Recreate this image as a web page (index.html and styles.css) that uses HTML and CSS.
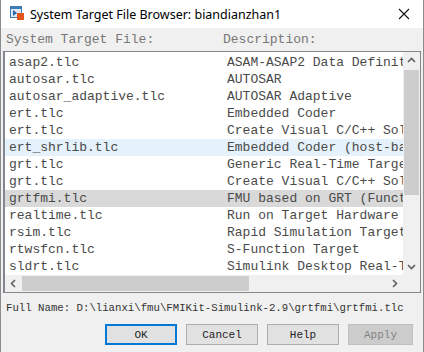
FILE: index.html
```html
<!DOCTYPE html>
<html lang="en">
<head>
  <meta charset="UTF-8" />
  <title>System Target File Browser</title>
  <link rel="stylesheet" href="styles.css">
</head>
<body>
  <div class="dialog">
    <div class="titlebar">
      <svg class="app-icon" width="14" height="14" viewBox="0 0 14 14">
        <rect x="0.5" y="0.5" width="11" height="11" fill="#dbe9f7" stroke="#3d7ab8"/>
        <rect x="0.5" y="0.5" width="11" height="2.5" fill="#3d7ab8"/>
        <path d="M3 4 L7 7 L3 10 Z" fill="#2a64a8"/>
        <rect x="7" y="7" width="7" height="7" fill="#e2561c"/>
      </svg>
      <span class="title">System Target File Browser: biandianzhan1</span>
      <svg class="close" width="12" height="12" viewBox="0 0 12 12">
        <path d="M1 1 L11 11 M11 1 L1 11" stroke="#111" stroke-width="1.1"/>
      </svg>
    </div>

    <div class="content">
      <div class="headers">
        <span class="col-file">System Target File:</span>
        <span>Description:</span>
      </div>

      <div class="listbox">
        <div class="rows">
          <div class="row"><span class="cell-file">asap2.tlc</span><span class="cell-desc">ASAM-ASAP2 Data Definition for Simulink Coder</span></div>
          <div class="row"><span class="cell-file">autosar.tlc</span><span class="cell-desc">AUTOSAR</span></div>
          <div class="row"><span class="cell-file">autosar_adaptive.tlc</span><span class="cell-desc">AUTOSAR Adaptive</span></div>
          <div class="row"><span class="cell-file">ert.tlc</span><span class="cell-desc">Embedded Coder</span></div>
          <div class="row"><span class="cell-file">ert.tlc</span><span class="cell-desc">Create Visual C/C++ Solution File for Embedded Coder</span></div>
          <div class="row hover"><span class="cell-file">ert_shrlib.tlc</span><span class="cell-desc">Embedded Coder (host-based shared library target)</span></div>
          <div class="row"><span class="cell-file">grt.tlc</span><span class="cell-desc">Generic Real-Time Target</span></div>
          <div class="row"><span class="cell-file">grt.tlc</span><span class="cell-desc">Create Visual C/C++ Solution File for Simulink Coder</span></div>
          <div class="row selected"><span class="cell-file">grtfmi.tlc</span><span class="cell-desc">FMU based on GRT (Functional Mock-up Interface)</span></div>
          <div class="row"><span class="cell-file">realtime.tlc</span><span class="cell-desc">Run on Target Hardware</span></div>
          <div class="row"><span class="cell-file">rsim.tlc</span><span class="cell-desc">Rapid Simulation Target</span></div>
          <div class="row"><span class="cell-file">rtwsfcn.tlc</span><span class="cell-desc">S-Function Target</span></div>
          <div class="row"><span class="cell-file">sldrt.tlc</span><span class="cell-desc">Simulink Desktop Real-Time</span></div>
        </div>

        <div class="vscroll">
          <svg class="arrow" width="17" height="17" viewBox="0 0 17 17"><path d="M5 10 L8.5 6.5 L12 10" fill="none" stroke="#606060" stroke-width="1.6"/></svg>
          <div class="vtrack"><div class="vthumb"></div></div>
          <svg class="arrow" width="17" height="17" viewBox="0 0 17 17"><path d="M5 7 L8.5 10.5 L12 7" fill="none" stroke="#606060" stroke-width="1.6"/></svg>
        </div>

        <div class="hscroll">
          <svg class="arrow" width="17" height="17" viewBox="0 0 17 17"><path d="M10 5 L6.5 8.5 L10 12" fill="none" stroke="#606060" stroke-width="1.6"/></svg>
          <div class="htrack"><div class="hthumb"></div></div>
          <svg class="arrow" width="17" height="17" viewBox="0 0 17 17"><path d="M7 5 L10.5 8.5 L7 12" fill="none" stroke="#606060" stroke-width="1.6"/></svg>
        </div>
        <div class="corner"></div>
      </div>

      <div class="fullname">Full Name: D:\lianxi\fmu\FMIKit-Simulink-2.9\grtfmi\grtfmi.tlc</div>

      <div class="buttons">
        <button class="btn default">OK</button>
        <button class="btn">Cancel</button>
        <button class="btn">Help</button>
        <button class="btn disabled">Apply</button>
      </div>
    </div>
  </div>
</body>
</html>
```

FILE: styles.css
```css
body {
  margin: 0;
  width: 424px;
  height: 352px;
  overflow: hidden;
  background: #f0f0f0;
}
.dialog {
  height: 352px;
  border-left: 1px solid #8c8c8c;
  border-right: 1px solid #8c8c8c;
  box-sizing: border-box;
  display: flex;
  flex-direction: column;
}
.titlebar {
  height: 28px;
  background: #ffffff;
  display: flex;
  align-items: center;
  padding-left: 9px;
  flex-shrink: 0;
}
.app-icon {
  margin-right: 6px;
  margin-top: -2px;
}
.title {
  font-family: "Noto Sans", sans-serif;
  font-size: 12.5px;
  color: #000;
  flex: 1;
}
.close {
  margin-right: 13px;
}
.content {
  flex: 1;
  display: flex;
  flex-direction: column;
  padding: 0 2px 0 2px;
}
.headers {
  height: 23px;
  display: flex;
  align-items: center;
  padding-left: 3px;
  font-family: "Liberation Mono", monospace;
  font-size: 13px;
  color: #777;
}
.col-file {
  width: 217px;
}
.listbox {
  height: 242px;
  border: 1px solid #828790;
  border-left-width: 2px;
  background: #ffffff;
  display: grid;
  grid-template-columns: 1fr 17px;
  grid-template-rows: 1fr 17px;
  box-sizing: border-box;
}
.rows {
  padding-top: 2px;
  overflow: hidden;
  font-family: "Liberation Mono", monospace;
  font-size: 13px;
  color: #4a4a4a;
}
.row {
  height: 17px;
  line-height: 17px;
  display: flex;
  white-space: nowrap;
  padding-left: 4px;
}
.row.hover {
  background: #e5f1fb;
}
.row.selected {
  background: #d9d9d9;
}
.cell-file {
  width: 218px;
  flex-shrink: 0;
}
.cell-desc {
  overflow: hidden;
}
.vscroll {
  display: flex;
  flex-direction: column;
  background: #f0f0f0;
}
.vtrack {
  flex: 1;
  padding: 1px 1px 0 1px;
}
.vthumb {
  height: 125px;
  background: #cdcdcd;
}
.hscroll {
  display: flex;
  background: #f0f0f0;
}
.htrack {
  flex: 1;
  padding: 1px 0 1px 0;
}
.hthumb {
  width: 227px;
  height: 15px;
  background: #cdcdcd;
}
.corner {
  background: #f0f0f0;
}
.arrow {
  flex-shrink: 0;
  display: block;
}
.fullname {
  height: 30px;
  line-height: 30px;
  padding-left: 3px;
  font-family: "Liberation Mono", monospace;
  font-size: 10.7px;
  color: #333;
  white-space: nowrap;
}
.buttons {
  display: flex;
  gap: 9px;
  padding-left: 102px;
  padding-top: 1px;
}
.btn {
  width: 72px;
  height: 21px;
  background: #e1e1e1;
  border: 1px solid #adadad;
  font-family: "Liberation Mono", monospace;
  font-size: 11px;
  color: #222;
  padding: 0;
}
.btn.default {
  border: 2px solid #0078d7;
}
.btn.disabled {
  width: 65px;
  background: #cccccc;
  border-color: #bfbfbf;
  color: #838383;
}
```
